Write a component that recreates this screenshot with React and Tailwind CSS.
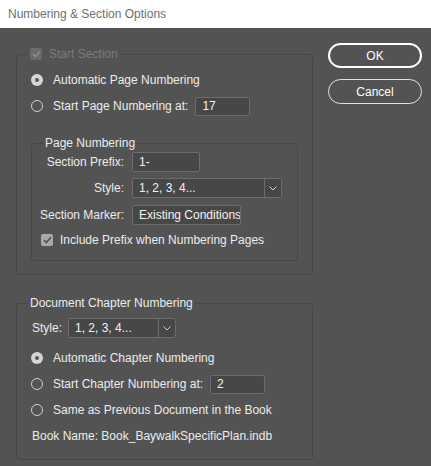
import React from "react";

const font = { fontFamily: '"Liberation Sans", Arial, sans-serif' };

function Radio({ checked }) {
  if (checked) {
    return (
      <span className="flex h-[12px] w-[12px] shrink-0 items-center justify-center rounded-full bg-[#d6d6d6]">
        <span className="h-[4px] w-[4px] rounded-full bg-[#555555]" />
      </span>
    );
  }
  return <span className="h-[12px] w-[12px] shrink-0 rounded-full border border-[#d0d0d0]" />;
}

function Check({ dim }) {
  return (
    <span
      className={
        "flex h-[12px] w-[12px] shrink-0 items-center justify-center rounded-[2px] " +
        (dim ? "bg-[#6a6a6a]" : "bg-[#a9a9a9]")
      }
    >
      <svg width="9" height="8" viewBox="0 0 9 8">
        <path
          d="M1 4.2 L3.4 6.5 L8 1.2"
          fill="none"
          stroke={dim ? "#8c8c8c" : "#4f4f4f"}
          strokeWidth="1.6"
        />
      </svg>
    </span>
  );
}

function Field({ value, className }) {
  return (
    <div
      className={
        "flex items-center overflow-hidden whitespace-nowrap border border-[#6c6c6c] bg-[#474747] pl-[6px] text-[#f2f2f2] rounded-[2px] " +
        className
      }
    >
      {value}
    </div>
  );
}

function Select({ value, className }) {
  return (
    <div
      className={
        "flex items-stretch border border-[#6c6c6c] bg-[#474747] text-[#f2f2f2] rounded-[2px] " +
        className
      }
    >
      <span className="flex flex-1 items-center pl-[6px]">{value}</span>
      <span className="flex w-[17px] items-center justify-center border-l border-[#6c6c6c]">
        <svg width="8" height="5" viewBox="0 0 8 5">
          <path d="M0.5 0.5 L4 4 L7.5 0.5" fill="none" stroke="#cfcfcf" strokeWidth="1" />
        </svg>
      </span>
    </div>
  );
}

export default function App() {
  return (
    <div className="h-[466px] w-[431px] overflow-hidden bg-[#535353] text-[12px] text-[#ececec]" style={font}>
      <div className="flex h-[28px] items-center bg-white pl-[8px] text-[12px] text-[#6e6e6e]">
        Numbering &amp; Section Options
      </div>

      <div className="flex pt-[15px]">
        <div className="ml-[16px] mt-[3px] w-[297px]">
          <fieldset className="rounded-[3px] border border-[#474747] pb-[13px]">
            <legend className="ml-[11px] flex h-[16px] items-center gap-[7px] px-[2px] text-[#7b7b7b]">
              <Check dim />
              <span>Start Section</span>
            </legend>

            <div className="pl-[14px]">
              <div className="mt-[8px] flex h-[20px] items-center gap-[10px]">
                <Radio checked />
                <span>Automatic Page Numbering</span>
              </div>
              <div className="mt-[6px] flex h-[20px] items-center gap-[10px]">
                <Radio />
                <span>Start Page Numbering at:</span>
                <Field value="17" className="-ml-[3px] h-[19px] w-[55px]" />
              </div>

              <fieldset className="mt-[19px] w-[267px] rounded-[3px] border border-[#474747] pb-[12px]">
                <legend className="ml-[11px] flex h-[16px] items-center px-[2px]">Page Numbering</legend>

                <div className="mt-[1px] flex h-[20px] items-center gap-[8px]">
                  <span className="w-[92px] text-right">Section Prefix:</span>
                  <Field value="1-" className="h-[20px] w-[68px]" />
                </div>
                <div className="mt-[6px] flex h-[20px] items-center gap-[8px]">
                  <span className="w-[92px] text-right">Style:</span>
                  <Select value="1, 2, 3, 4..." className="h-[20px] w-[150px]" />
                </div>
                <div className="mt-[7px] flex h-[20px] items-center gap-[8px]">
                  <span className="w-[92px] whitespace-nowrap text-right">Section Marker:</span>
                  <Field value="Existing Conditions" className="h-[20px] w-[109px] pl-[3px]" />
                </div>
                <div className="mt-[7px] flex h-[16px] items-center gap-[7px] pl-[9px]">
                  <Check />
                  <span>Include Prefix when Numbering Pages</span>
                </div>
              </fieldset>
            </div>
          </fieldset>

          <fieldset className="mt-[20px] rounded-[3px] border border-[#474747] pb-[13px]">
            <legend className="ml-[11px] flex h-[16px] items-center px-[2px]">Document Chapter Numbering</legend>

            <div className="pl-[14px]">
              <div className="mt-[7px] flex h-[20px] items-center gap-[6px]">
                <span className="pl-[1px]">Style:</span>
                <Select value="1, 2, 3, 4..." className="h-[20px] w-[108px]" />
              </div>
              <div className="mt-[10px] flex h-[20px] items-center gap-[10px]">
                <Radio checked />
                <span>Automatic Chapter Numbering</span>
              </div>
              <div className="mt-[6px] flex h-[20px] items-center gap-[10px]">
                <Radio />
                <span>Start Chapter Numbering at:</span>
                <Field value="2" className="-ml-[3px] h-[19px] w-[55px]" />
              </div>
              <div className="mt-[6px] flex h-[20px] items-center gap-[10px]">
                <Radio />
                <span>Same as Previous Document in the Book</span>
              </div>
              <div className="mt-[6px] flex h-[20px] items-center pl-[1px]">
                Book Name: Book_BaywalkSpecificPlan.indb
              </div>
            </div>
          </fieldset>
        </div>

        <div className="ml-[15px] flex w-[94px] flex-col gap-[11px]">
          <button className="flex h-[25px] items-center justify-center rounded-full border-2 border-white text-[12px] text-white">
            OK
          </button>
          <button className="flex h-[25px] items-center justify-center rounded-full border border-[#e2e2e2] text-[12px] text-white">
            Cancel
          </button>
        </div>
      </div>
    </div>
  );
}
